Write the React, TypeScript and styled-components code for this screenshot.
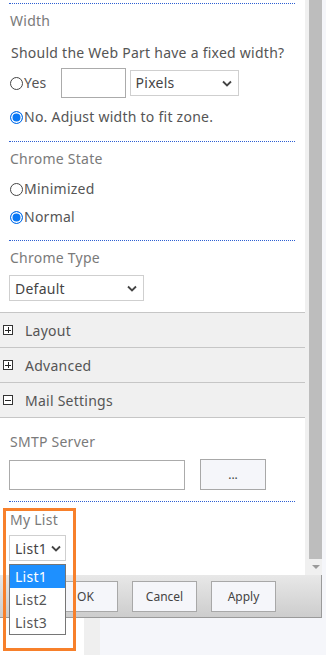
import * as React from "react";
import styled, { createGlobalStyle, css } from "styled-components";

const GlobalStyle = createGlobalStyle`
  html, body {
    margin: 0;
    padding: 0;
    background: #f5f6fa;
  }
  body {
    font-family: "Noto Sans", "Open Sans", sans-serif;
    letter-spacing: 0.25px;
    width: 326px;
    height: 655px;
    overflow: hidden;
  }
`;

const Page = styled.div`
  position: relative;
  width: 326px;
  height: 655px;
  background: #f5f6fa;
`;

const Panel = styled.div`
  display: flex;
  width: 322px;
  height: 575px;
`;

const Content = styled.div`
  width: 305px;
  height: 575px;
  background: #fff;
  overflow: hidden;
  display: flex;
  flex-direction: column;
`;

const Scrollbar = styled.div`
  width: 17px;
  height: 575px;
  background: #f0f0f0;
  display: flex;
  flex-direction: column;
  align-items: flex-end;
`;

const Thumb = styled.div`
  width: 13px;
  height: 559px;
  background: #bdbdbd;
`;

const ArrowDown = styled.div`
  width: 13px;
  height: 16px;
  display: flex;
  align-items: center;
  justify-content: center;
  &::after {
    content: "";
    border-left: 4px solid transparent;
    border-right: 4px solid transparent;
    border-top: 4px solid #9a9a9a;
  }
`;

const Section = styled.div<{ $pad?: number }>`
  margin: 0 10px 0 9px;
  border-top: 1px dotted #2d5fd3;
  padding: 7px 0 ${(p) => p.$pad ?? 10}px 0;
  display: flex;
  flex-direction: column;
`;

const Heading = styled.div`
  font-size: 14px;
  color: #7a7a7a;
  line-height: 20px;
  padding-left: 1px;
`;

const Question = styled.div`
  font-size: 14px;
  color: #555;
  line-height: 20px;
  margin-top: 12px;
  padding-left: 2px;
`;

const Row = styled.div<{ $mt?: number }>`
  display: flex;
  align-items: center;
  margin-top: ${(p) => p.$mt ?? 0}px;
  font-size: 14px;
  color: #555;
  line-height: 20px;
`;

const Radio = styled.span<{ $checked?: boolean }>`
  display: inline-block;
  box-sizing: border-box;
  width: 13px;
  height: 13px;
  border-radius: 50%;
  margin: 0 1px 0 1px;
  border: 1px solid #444;
  background: #fff;
  ${(p) =>
    p.$checked &&
    css`
      border: 1px solid #0a6fe8;
      background: #0a78f5;
      box-shadow: inset 0 0 0 1.5px #fff;
    `}
`;

const TextBox = styled.div<{ $w: number; $h: number }>`
  box-sizing: border-box;
  width: ${(p) => p.$w}px;
  height: ${(p) => p.$h}px;
  border: 1px solid #ababab;
  background: #fff;
`;

const Select = styled.div<{ $w: number }>`
  box-sizing: border-box;
  width: ${(p) => p.$w}px;
  height: 26px;
  border: 1px solid #cfcfcf;
  background: #fff;
  display: flex;
  align-items: center;
  justify-content: space-between;
  padding: 0 6px 0 5px;
  font-size: 14px;
  color: #444;
`;

const Chevron = () => (
  <svg width="10" height="7" viewBox="0 0 10 7">
    <path d="M1 1.5 L5 5.5 L9 1.5" fill="none" stroke="#444" strokeWidth="1.8" />
  </svg>
);

const Accordion = styled.div`
  display: flex;
  align-items: center;
  height: 34px;
  background: #f0f0f0;
  border-top: 1px solid #c6c6c6;
  font-size: 14px;
  color: #555;
  &:last-of-type {
    border-bottom: 1px solid #c6c6c6;
  }
`;

const Toggle = styled.span`
  box-sizing: border-box;
  width: 10px;
  height: 10px;
  margin: 0 12px 0 3px;
  border: 1px solid #333;
  background: #fff;
  position: relative;
  &::before {
    content: "";
    position: absolute;
    left: 1px;
    right: 1px;
    top: 3.5px;
    height: 1px;
    background: #222;
  }
`;

const PlusToggle = styled(Toggle)`
  &::after {
    content: "";
    position: absolute;
    top: 1px;
    bottom: 1px;
    left: 3.5px;
    width: 1px;
    background: #222;
  }
`;

const MailBody = styled.div`
  padding-top: 14px;
`;

const SmtpRow = styled.div`
  display: flex;
  align-items: flex-start;
  gap: 15px;
  margin: 7px 0 0 9px;
`;

const SmallButton = styled.div<{ $w?: number }>`
  box-sizing: border-box;
  width: ${(p) => p.$w ?? 65}px;
  height: 31px;
  border: 1px solid #a8a8a8;
  background: #f5f6fa;
  display: flex;
  align-items: center;
  justify-content: center;
  font-size: 12px;
  letter-spacing: 0;
  color: #444;
`;

const Footer = styled.div`
  box-sizing: border-box;
  width: 322px;
  height: 43px;
  background: linear-gradient(#e8e8e8, #cdcdcd);
  border-right: 1px solid #9a9a9a;
  border-bottom: 1px solid #9a9a9a;
  display: flex;
  align-items: center;
  gap: 14px;
  padding-left: 53px;
`;

const Below = styled.div`
  display: flex;
  height: 38px;
`;

const BelowWhite = styled.div`
  width: 84px;
  background: #fff;
`;

const BelowStrip = styled.div`
  width: 16px;
  background: #efefef;
`;

const Highlight = styled.div`
  position: absolute;
  left: 3px;
  top: 508px;
  width: 73px;
  height: 143px;
  box-sizing: border-box;
  border: 3px solid #f7802b;
`;

const DropList = styled.div`
  position: absolute;
  left: 9px;
  top: 564px;
  width: 57px;
  box-sizing: border-box;
  border: 1px solid #767676;
  background: #fff;
`;

const DropItem = styled.div<{ $active?: boolean }>`
  height: 23px;
  line-height: 23px;
  padding-left: 5px;
  font-size: 14px;
  color: ${(p) => (p.$active ? "#fff" : "#555")};
  background: ${(p) => (p.$active ? "#1e90ff" : "#fff")};
`;

export default function App() {
  return (
    <Page>
      <GlobalStyle />
      <Panel>
        <Content>
          <Section $pad={14} style={{ marginTop: 3 }}>
            <Heading>Width</Heading>
            <Question>Should the Web Part have a fixed width?</Question>
            <Row $mt={5}>
              <Radio />
              Yes
              <TextBox $w={65} $h={30} style={{ marginLeft: 14 }} />
              <Select $w={109} style={{ marginLeft: 4 }}>
                Pixels
                <Chevron />
              </Select>
            </Row>
            <Row $mt={9}>
              <Radio $checked />
              No. Adjust width to fit zone.
            </Row>
          </Section>
          <Section $pad={13}>
            <Heading>Chrome State</Heading>
            <Row $mt={10}>
              <Radio />
              Minimized
            </Row>
            <Row $mt={8}>
              <Radio $checked />
              Normal
            </Row>
          </Section>
          <Section $pad={11}>
            <Heading>Chrome Type</Heading>
            <Select $w={135} style={{ marginTop: 7 }}>
              Default
              <Chevron />
            </Select>
          </Section>
          <div>
            <Accordion>
              <PlusToggle />
              Layout
            </Accordion>
            <Accordion>
              <PlusToggle />
              Advanced
            </Accordion>
            <Accordion>
              <Toggle />
              Mail Settings
            </Accordion>
          </div>
          <MailBody>
            <Heading style={{ marginLeft: 9 }}>SMTP Server</Heading>
            <SmtpRow>
              <TextBox $w={176} $h={30} style={{ marginTop: 1 }} />
              <SmallButton $w={66}>...</SmallButton>
            </SmtpRow>
          </MailBody>
          <Section $pad={0} style={{ marginTop: 11 }}>
            <Heading style={{ marginTop: 1 }}>My List</Heading>
            <Select $w={57} style={{ marginTop: 5, paddingRight: 4 }}>
              List1
              <Chevron />
            </Select>
          </Section>
        </Content>
        <Scrollbar>
          <Thumb />
          <ArrowDown />
        </Scrollbar>
      </Panel>
      <Footer>
        <SmallButton>OK</SmallButton>
        <SmallButton>Cancel</SmallButton>
        <SmallButton>Apply</SmallButton>
      </Footer>
      <Below>
        <BelowWhite />
        <BelowStrip />
      </Below>
      <DropList>
        <DropItem $active>List1</DropItem>
        <DropItem>List2</DropItem>
        <DropItem>List3</DropItem>
      </DropList>
      <Highlight />
    </Page>
  );
}
